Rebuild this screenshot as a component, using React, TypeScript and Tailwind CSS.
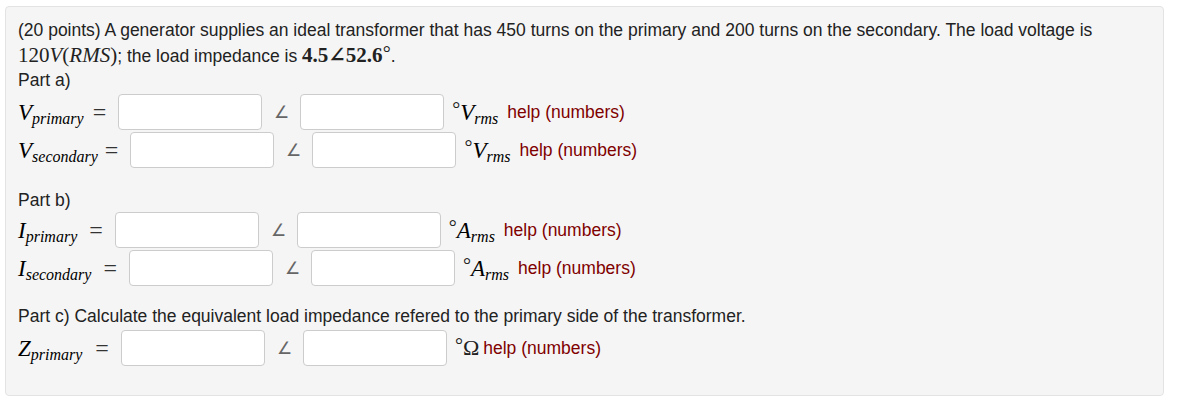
import React from "react";

const serif = { fontFamily: '"Liberation Serif", "DejaVu Serif", serif' };

function Sym({ main, sub }: { main: string; sub: string }) {
  return (
    <span className="italic text-[23px] leading-none text-black" style={serif}>
      {main}
      <span className="text-[16px] relative top-[4px]">{sub}</span>
    </span>
  );
}

function Deg() {
  return (
    <span className="relative top-[-3px] text-[20px] leading-none" style={serif}>
      °
    </span>
  );
}

function Field() {
  return <input className="h-[36px] w-[144px] rounded-[4px] border border-[#cccccc] bg-white" />;
}

function Row({
  main,
  sub,
  unit,
  eq = "ml-[9px]",
  help = "ml-[9px]",
  className = "",
}: {
  main: string;
  sub: string;
  unit: React.ReactNode;
  eq?: string;
  help?: string;
  className?: string;
}) {
  return (
    <div className={`flex h-[38px] items-center ${className}`}>
      <Sym main={main} sub={sub} />
      <span className={`${eq} mr-[12px] text-[24px] leading-none text-[#333]`} style={serif}>
        =
      </span>
      <Field />
      <span
        className="ml-[12px] mr-[11px] text-[17px] font-extralight leading-none text-[#666]"
        style={{ fontFamily: '"DejaVu Sans", sans-serif' }}
      >
        ∠
      </span>
      <Field />
      <span className="ml-[8px] flex items-center text-[17.5px]">
        <Deg />
        {unit}
        <a className={`${help} text-[#800000]`}>help (numbers)</a>
      </span>
    </div>
  );
}

export default function App() {
  const vrms = <Sym main="V" sub="rms" />;
  const arms = <Sym main="A" sub="rms" />;
  const ohm = <span className="text-[22px] leading-none" style={serif}>Ω</span>;
  return (
    <div className="bg-white pt-[6px] pl-[5px] pr-[33px]" style={{ fontFamily: '"Liberation Sans", Arial, sans-serif' }}>
      <div className="h-[390px] rounded-[4px] border border-[#e3e3e3] bg-[#f5f5f5] px-[12px] pt-[11px] text-[17.5px] text-[#222]">
        <div className="leading-[25px]">
          (20 points) A generator supplies an ideal transformer that has 450 turns on the primary and 200 turns on the secondary. The load voltage is{" "}
          <span className="text-[21px]" style={serif}>
            120<i>V</i>(<i>RMS</i>)
          </span>
          ; the load impedance is{" "}
          <span className="text-[21px] font-bold" style={serif}>
            4.5∠52.6
          </span>
          <span className="relative top-[-2px] text-[20px]" style={serif}>°</span>.
        </div>
        <div className="mt-[1px] leading-[20px]">Part a)</div>
        <Row className="mt-[3px]" main="V" sub="primary" unit={vrms} />
        <Row main="V" sub="secondary" eq="ml-[7px]" unit={vrms} />
        <div className="mt-[21px] leading-[20px]">Part b)</div>
        <Row className="mt-[1px]" main="I" sub="primary" eq="ml-[12px]" unit={arms} />
        <Row main="I" sub="secondary" eq="ml-[12px]" unit={arms} />
        <div className="mt-[19px] leading-[20px]">
          Part c) Calculate the equivalent load impedance refered to the primary side of the transformer.
        </div>
        <Row className="mt-[3px]" main="Z" sub="primary" eq="ml-[13px]" help="ml-[4px]" unit={ohm} />
      </div>
    </div>
  );
}
